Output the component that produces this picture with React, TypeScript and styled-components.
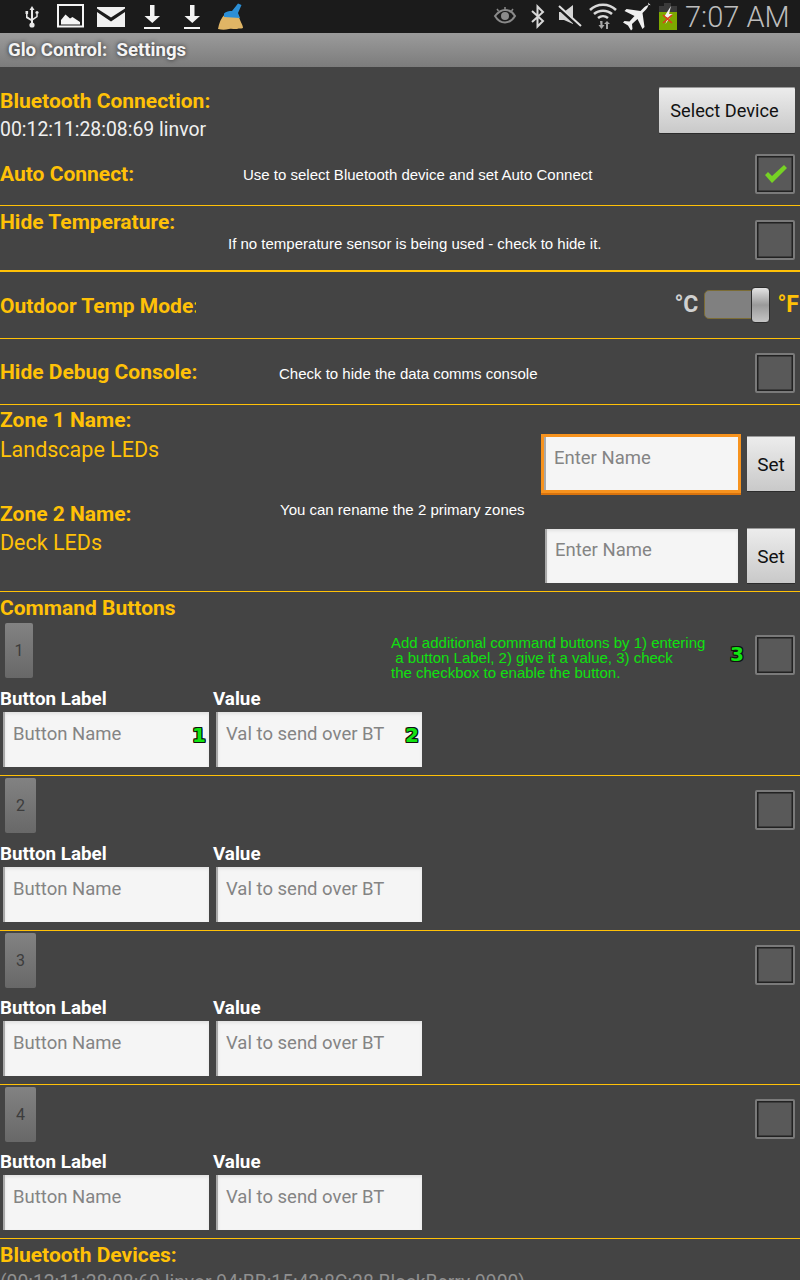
import React from 'react';
import styled, { createGlobalStyle } from 'styled-components';

const Global = createGlobalStyle`
  html, body { margin: 0; padding: 0; background: #444; }
  * { box-sizing: border-box; }
`;
const GOLD = '#ffc107';

const Page = styled.div`
  width: 800px; height: 1280px; overflow: hidden; background: #444444;
  font-family: Roboto, "Liberation Sans", sans-serif; color: #fff;
`;
const StatusBar = styled.div`
  height: 33px; background: #1b1b1b; display: flex; align-items: flex-start;
`;
const Ico = styled.svg<{ $gap: number }>`
  display: block; flex: none; height: 33px; margin-left: ${p => p.$gap}px;
`;
const Clock = styled.span`
  font-size: 29px; font-weight: 300; line-height: 35px; color: #bdbdbd; margin-left: 7px; white-space: nowrap;
`;
const TitleBar = styled.div`
  height: 34px; background: linear-gradient(#9b9b9b, #7c7c7c); display: flex; align-items: center;
  padding: 0 0 0 8px; font-size: 18.6px; font-weight: 700; color: #f4f4f4; text-shadow: 0 0 4px #222;
  white-space: pre;
`;
const Section = styled.div<{ $h: number; $line?: number }>`
  height: ${p => p.$h}px; border-bottom: ${p => p.$line ?? 1}px solid ${GOLD};
  display: flex; align-items: flex-start; flex: none;
`;
const PlainSection = styled.div<{ $h: number }>`
  height: ${p => p.$h}px; display: flex; align-items: flex-start; justify-content: space-between;
`;
const LabelCol = styled.div<{ $w: number }>`
  width: ${p => p.$w}px; flex: none; overflow: hidden;
`;
const Heading = styled.div<{ $top?: number }>`
  font-size: 21px; line-height: 24px; font-weight: 700; color: ${GOLD}; white-space: nowrap;
  margin-top: ${p => p.$top ?? 0}px;
`;
const Value = styled.div<{ $top?: number; $gold?: boolean }>`
  font-size: ${p => (p.$gold ? 21.5 : 19.4)}px; line-height: 24px; white-space: nowrap; margin-top: ${p => p.$top ?? 0}px;
  color: ${p => (p.$gold ? GOLD : '#f0f0f0')};
`;
const Help = styled.div<{ $top: number }>`
  font-family: "Liberation Sans", Arial, sans-serif; font-size: 15px; line-height: 18px; color: #fff;
  white-space: nowrap; margin-top: ${p => p.$top}px; flex: 1;
`;
const Check = styled.div<{ $top: number }>`
  width: 40px; height: 40px; flex: none; margin: ${p => p.$top}px 5px 0 auto;
  border: 2px solid #7a7a7a; border-radius: 2px; background: #595959;
  box-shadow: inset 0 0 0 1.5px #222; display: flex; align-items: center; justify-content: center;
`;
const ActionButton = styled.div<{ $w: number; $h: number; $top: number }>`
  width: ${p => p.$w}px; height: ${p => p.$h}px; margin: ${p => p.$top}px 5px 0 0; flex: none;
  background: linear-gradient(#ececec, #c9c9c9); color: #111; font-size: 18.2px; padding-right: 5px;
  border-radius: 1px; display: flex; align-items: center; justify-content: center;
  box-shadow: 0 1px 0 #2c2c2c, 0 -1px 0 #9a9a9a;
`;
const ToggleWrap = styled.div`
  margin: 18px 1px 0 auto; display: flex; align-items: center;
`;
const Unit = styled.span<{ $on?: boolean }>`
  font-size: 23px; font-weight: 700; color: ${p => (p.$on ? GOLD : '#d0d0d0')};
`;
const Track = styled.div`
  width: 66px; height: 29px; margin: 0 7px 0 6px; background: #808080; border: 1px solid #7b6c35;
  border-radius: 5px; display: flex; justify-content: flex-end; align-items: center;
`;
const Thumb = styled.div`
  width: 19px; height: 36px; flex: none; border-radius: 4px; border: 1px solid #2d2d2d; margin-right: -1px;
  background: linear-gradient(#e4e4e4, #9a9a9a 50%, #c5c5c5);
`;
const TextBox = styled.input<{ $w: number; $h: number; $focus?: boolean }>`
  display: block; width: ${p => p.$w}px; height: ${p => p.$h}px; flex: none;
  background: #f5f5f5; border: none; border-left: 2px solid #a9a9a9; outline: none; border-radius: 0;
  padding: 0 0 12px 8px; font-family: Roboto, sans-serif; font-size: 18.5px; color: #222;
  box-shadow: ${p => (p.$focus ? '0 0 0 3px #f7931e, 0 2px 0 3px #d9730d' : 'inset 0 2px 3px #e2e2e2')};
  &::placeholder { color: #848484; opacity: 1; }
`;
const ZoneControls = styled.div`
  display: flex; flex-direction: column; margin-left: auto; margin-right: 5px; flex: none;
`;
const ZoneRow = styled.div<{ $top: number; $gap: number }>`
  display: flex; align-items: flex-start; justify-content: flex-end; margin-top: ${p => p.$top}px; gap: ${p => p.$gap}px;
`;
const SetButton = styled.div`
  width: 48px; height: 54px; background: linear-gradient(#ececec, #c9c9c9); color: #111; font-size: 19px;
  display: flex; align-items: center; justify-content: center; box-shadow: 0 1px 0 #2c2c2c, 0 -1px 0 #9a9a9a;
`;
const CmdHeader = styled.div`
  height: 30px; flex: none; display: flex; flex-direction: column;
`;
const CmdBlock = styled.div<{ $h: number }>`
  height: ${p => p.$h}px; border-bottom: 1px solid ${GOLD}; display: flex; flex-direction: column;
`;
const CmdTop = styled.div<{ $h: number }>`
  display: flex; align-items: flex-start; height: ${p => p.$h}px; flex: none;
`;
const NumButton = styled.div<{ $w: number; $top: number }>`
  width: ${p => p.$w}px; height: 55px; margin: ${p => p.$top}px 0 0 5px; flex: none;
  background: linear-gradient(#828282, #686868); color: #3c3c3c; font-size: 16px; border-radius: 2px;
  display: flex; align-items: center; justify-content: center;
`;
const GreenNote = styled.div`
  font-family: "Liberation Sans", Arial, sans-serif; font-size: 15px; line-height: 15px; color: #10e010;
  white-space: pre; margin: 13px 0 0 358px; width: 339px; flex: none;
`;
const Badge = styled.span`
  position: absolute; font-family: "DejaVu Sans", sans-serif; font-weight: 700; font-size: 20px; line-height: 20px;
  color: #12e412; right: 3px; top: 13px;
  text-shadow: -1px 0 #111, 1px 0 #111, 0 -1px #111, 0 1px #111, -1px -1px #111, 1px 1px #111, 1px -1px #111, -1px 1px #111;
`;
const NoteBadge = styled(Badge)`
  position: static; margin: 22px 0 0 0; flex: none;
`;
const Fields = styled.div`
  display: grid; grid-template-columns: 206px 206px; column-gap: 7px; padding-left: 3px; row-gap: 2px;
`;
const FieldLabel = styled.div`
  font-size: 18.8px; line-height: 21px; font-weight: 700; color: #fff; margin-left: -3px; white-space: nowrap;
`;
const InputWrap = styled.div`
  position: relative; height: 55px;
`;
const DeviceList = styled.div`
  color: #8f8f8f; font-size: 19.3px; line-height: 22px; white-space: nowrap; margin-top: 5px;
`;

const StatusIcons = () => (
  <>
    <Ico $gap={24} width="16" viewBox="24 0 16 33" fill="#e8e8e8">
      <path d="M31 10h2v14h-2z" /><circle cx="32" cy="25" r="2.6" /><path d="M32 6l2.5 4h-5z" />
      <rect x="25.5" y="11" width="2.6" height="3" /><path d="M26 14h1.5v2.5l4.5 3v2l-6-3.6z" />
      <circle cx="37" cy="12.5" r="1.6" /><path d="M36.3 14h1.4v3L32 21v-2l4.3-2.8z" />
    </Ico>
    <Ico $gap={16} width="29" viewBox="56 0 29 33">
      <rect x="58" y="5" width="25" height="21.5" fill="none" stroke="#f4f4f4" strokeWidth="2" />
      <path d="M61 24.5V20l4.5-5.5 4.5 4 2.500-1.500 7.500 5v2.500z" fill="#f4f4f4" />
    </Ico>
    <Ico $gap={11} width="30" viewBox="96 0 30 33" fill="#f0f0f0">
      <path d="M97 7h28v1.500l-14 9-14-9z" /><path d="M97 12l14 9.500L125 12v15H97z" />
    </Ico>
    <Ico $gap={17} width="18" viewBox="143 0 18 33" fill="#f4f4f4">
      <path d="M150 5h4.500v11h5.500l-7.700 7-7.800-7h5.500z" /><rect x="144" y="27" width="16" height="2" />
    </Ico>
    <Ico $gap={22} width="18" viewBox="183 0 18 33" fill="#f4f4f4">
      <path d="M190 5h4.500v11h5.500l-7.700 7-7.800-7h5.500z" /><rect x="184" y="27" width="16" height="2" />
    </Ico>
    <Ico $gap={15} width="30" viewBox="216 0 30 33">
      <path d="M218 29c1-6 3-11 7-15l14 3c1 4 4 8 4 11-2 1-4 0-6 1-3 .5-5-1-8 0-4 1-7 1-11 0z" fill="#e0b565" />
      <path d="M224 13.500c2-2 5-2.500 8-2.500l6-7.500 3.500 1.500-3.500 8 2 5-16-1z" fill="#2c8fd6" />
    </Ico>
    <Ico $gap={247} width="24" viewBox="493 0 24 33" fill="none" stroke="#8a8a8a">
      <path d="M495 16c4-5 8-6 10-6s7 1 10 6c-3 5-7 6.500-10 6.500S498 21 495 16z" strokeWidth="2" />
      <circle cx="505" cy="16" r="4" fill="#8a8a8a" stroke="none" />
      <path d="M497 9l1.500 2M505 7v2.500M513 9l-1.500 2" strokeWidth="1.500" />
    </Ico>
    <Ico $gap={12} width="18" viewBox="529 0 18 33" fill="none" stroke="#d8d8d8" strokeWidth="2">
      <path d="M532 11l11 10-5.500 5.500V6.500L543 12l-11 10" />
    </Ico>
    <Ico $gap={10} width="26" viewBox="557 0 26 33">
      <path d="M559 12h5l9-7v19l-9-4h-5z" fill="#d4d4d4" />
      <path d="M558 7l22 20" stroke="#1b1b1b" strokeWidth="4" />
      <path d="M559 6l22 20" stroke="#e0e0e0" strokeWidth="2" />
    </Ico>
    <Ico $gap={5} width="30" viewBox="588 0 30 33" fill="none" stroke="#d8d8d8">
      <path d="M590 10c7-7 19-7 26 0" strokeWidth="2.500" />
      <path d="M594 14c5-4.500 13-4.500 18 0" strokeWidth="2.500" />
      <path d="M598 18c3-2.500 7-2.500 10 0" strokeWidth="2.500" />
      <path d="M600 21h2.500v4h2l-3 4-3-4h2z M606 29v-5h-2l3-3 3 3h-2v5z" fill="#a8a8a8" stroke="none" />
    </Ico>
    <Ico $gap={4} width="30" viewBox="622 0 30 33">
      <path d="M651 6.500c-2-1-5 0-7 2l-3.500 3.500-14-2-2 2 10 5-5 5.500-5-.5-1.500 1.500 5 3 3 5 1.500-1.500-.5-5 5.500-5 5 10 2-2-2-14 3.500-3.500c2-2 3-5 2-7z" fill="#f0f0f0" transform="translate(0 -1)" />
    </Ico>
    <Ico $gap={6} width="20" viewBox="658 0 20 33">
      <rect x="664" y="3" width="7" height="3" fill="#3a3a3a" />
      <rect x="659" y="6" width="18" height="6" fill="#3a3a3a" />
      <rect x="659" y="12" width="18" height="18" fill="#7ea800" />
      <path d="M671 6l-7 11h3.500l-2 7 7-10h-3.500z" fill="#f2f2f2" />
      <path d="M663 15l9 8M672 15l-9 8" stroke="#e03a1e" strokeWidth="1.600" />
    </Ico>
  </>
);

const FieldSet = ({ first }: { first?: boolean }) => (
  <Fields>
    <FieldLabel>Button Label</FieldLabel>
    <FieldLabel>Value</FieldLabel>
    <InputWrap>
      <TextBox $w={206} $h={55} placeholder="Button Name" readOnly />
      {first && <Badge>1</Badge>}
    </InputWrap>
    <InputWrap>
      <TextBox $w={206} $h={55} placeholder="Val to send over BT" readOnly />
      {first && <Badge>2</Badge>}
    </InputWrap>
  </Fields>
);

export default function App() {
  return (
    <Page>
      <Global />
      <StatusBar>
        <StatusIcons />
        <Clock>7:07 AM</Clock>
      </StatusBar>
      <TitleBar>Glo Control:  Settings</TitleBar>

      <PlainSection $h={87}>
        <div>
          <Heading $top={22}>Bluetooth Connection:</Heading>
          <Value $top={5}>00:12:11:28:08:69 linvor</Value>
        </div>
        <ActionButton $w={136} $h={45} $top={21}>Select Device</ActionButton>
      </PlainSection>
      <Section $h={52}>
        <LabelCol $w={243}><Heading $top={8}>Auto Connect:</Heading></LabelCol>
        <Help $top={12}>Use to select Bluetooth device and set Auto Connect</Help>
        <Check $top={0}>
          <svg width="28" height="24" viewBox="0 0 28 24">
            <path d="M4 13l3-3 4 4L23 3l3 3-15 15z" fill="#76d224" />
          </svg>
        </Check>
      </Section>
      <Section $h={66} $line={2}>
        <LabelCol $w={228}><Heading $top={4}>Hide Temperature:</Heading></LabelCol>
        <Help $top={29}>If no temperature sensor is being used - check to hide it.</Help>
        <Check $top={14} />
      </Section>
      <Section $h={67}>
        <LabelCol $w={196}><Heading $top={22}>Outdoor Temp Mode:</Heading></LabelCol>
        <ToggleWrap>
          <Unit>°C</Unit>
          <Track><Thumb /></Track>
          <Unit $on>°F</Unit>
        </ToggleWrap>
      </Section>
      <Section $h={66}>
        <LabelCol $w={279}><Heading $top={21}>Hide Debug Console:</Heading></LabelCol>
        <Help $top={26}>Check to hide the data comms console</Help>
        <Check $top={14} />
      </Section>
      <Section $h={187}>
        <LabelCol $w={280}>
          <Heading $top={3}>Zone 1 Name:</Heading>
          <Value $top={6} $gold>Landscape LEDs</Value>
          <Heading $top={40}>Zone 2 Name:</Heading>
          <Value $top={5} $gold>Deck LEDs</Value>
        </LabelCol>
        <Help $top={96}>You can rename the 2 primary zones</Help>
        <ZoneControls>
          <ZoneRow $top={32} $gap={9}>
            <TextBox $w={194} $h={53} $focus placeholder="Enter Name" readOnly />
            <SetButton>Set</SetButton>
          </ZoneRow>
          <ZoneRow $top={38} $gap={9}>
            <TextBox $w={193} $h={54} placeholder="Enter Name" readOnly />
            <SetButton>Set</SetButton>
          </ZoneRow>
        </ZoneControls>
      </Section>

      <CmdHeader><Heading $top={4}>Command Buttons</Heading></CmdHeader>
      <CmdBlock $h={154}>
        <CmdTop $h={67}>
          <NumButton $w={28} $top={1}>1</NumButton>
          <GreenNote>{'Add additional command buttons by 1) entering\n a button Label, 2) give it a value, 3) check\nthe checkbox to enable the button.'}</GreenNote>
          <NoteBadge>3</NoteBadge>
          <Check $top={13} />
        </CmdTop>
        <FieldSet first />
      </CmdBlock>
      {[2, 3, 4].map(n => (
        <CmdBlock key={n} $h={n === 2 ? 155 : 154}>
          <CmdTop $h={n === 2 ? 68 : 67}>
            <NumButton $w={31} $top={2}>{n}</NumButton>
            <Check $top={14} />
          </CmdTop>
          <FieldSet />
        </CmdBlock>
      ))}
      <Heading $top={4}>Bluetooth Devices:</Heading>
      <DeviceList>(00:12:11:28:08:69 linvor 94:BB:15:42:8C:28 BlackBerry 9900)</DeviceList>
    </Page>
  );
}
